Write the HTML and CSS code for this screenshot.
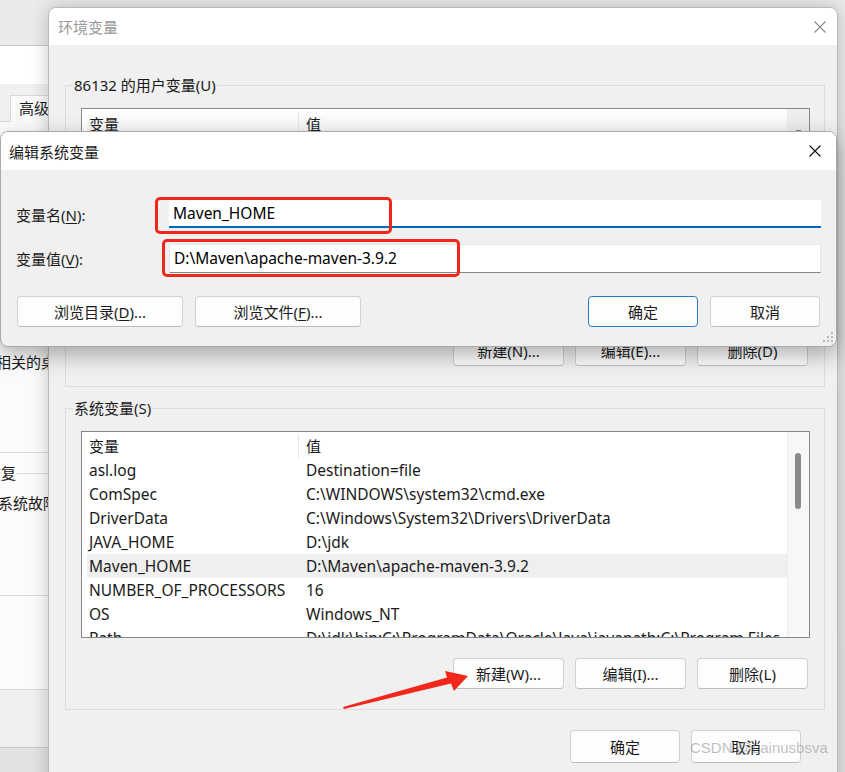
FILE: index.html
```html
<!DOCTYPE html>
<html lang="zh-CN">
<head>
<meta charset="utf-8">
<title>编辑系统变量</title>
<link rel="stylesheet" href="styles.css">
</head>
<body>
<div class="desk">

  <!-- background: System Properties window -->
  <div class="win sys">
    <div class="sys-title"></div>
    <div class="sys-tabs"><span class="tab">高级</span></div>
    <div class="sys-page">
      <div class="sys-sec s1"><p class="sys-text t1">与登录用户相关的桌面设置</p></div>
      <div class="sys-sec s2">
        <div class="sys-group"><span class="sys-legend">启动和故障恢复</span></div>
        <p class="sys-text t3">系统故障和调试信息</p>
      </div>
      <div class="sys-sec s3"></div>
    </div>
  </div>

  <!-- Environment variables window -->
  <div class="win env">
    <div class="titlebar env-title">
      <span class="title inactive">环境变量</span>
      <svg class="close grey" viewBox="0 0 12 12" width="12" height="12"><path d="M0.5 0.5 L11.5 11.5 M11.5 0.5 L0.5 11.5"/></svg>
    </div>
    <div class="env-body">
      <div class="group g1">
        <span class="legend">86132 的用户变量(U)</span>
        <div class="list">
          <div class="lmain">
            <div class="row head"><span class="c1">变量</span><span class="c2">值</span></div>
            <div class="row"><span class="c1">OneDrive</span><span class="c2">C:\Users\86132\OneDrive</span></div>
            <div class="row"><span class="c1">Path</span><span class="c2">C:\Users\86132\AppData\Local\Microsoft\WindowsApps;</span></div>
            <div class="row"><span class="c1">TEMP</span><span class="c2">C:\Users\86132\AppData\Local\Temp</span></div>
            <div class="row"><span class="c1">TMP</span><span class="c2">C:\Users\86132\AppData\Local\Temp</span></div>
          </div>
          <div class="sbar head-sbar"><span class="sbar-top"></span></div>
        </div>
        <div class="btnrow">
          <button class="btn">新建(N)...</button>
          <button class="btn">编辑(E)...</button>
          <button class="btn">删除(D)</button>
        </div>
      </div>

      <div class="group g2">
        <span class="legend">系统变量(S)</span>
        <div class="list">
          <div class="lmain">
            <div class="row head"><span class="c1">变量</span><span class="c2">值</span></div>
            <div class="row"><span class="c1">asl.log</span><span class="c2">Destination=file</span></div>
            <div class="row"><span class="c1">ComSpec</span><span class="c2">C:\WINDOWS\system32\cmd.exe</span></div>
            <div class="row"><span class="c1">DriverData</span><span class="c2">C:\Windows\System32\Drivers\DriverData</span></div>
            <div class="row"><span class="c1">JAVA_HOME</span><span class="c2">D:\jdk</span></div>
            <div class="row sel"><span class="c1">Maven_HOME</span><span class="c2">D:\Maven\apache-maven-3.9.2</span></div>
            <div class="row"><span class="c1">NUMBER_OF_PROCESSORS</span><span class="c2">16</span></div>
            <div class="row"><span class="c1">OS</span><span class="c2">Windows_NT</span></div>
            <div class="row"><span class="c1">Path</span><span class="c2">D:\jdk\bin;C:\ProgramData\Oracle\Java\javapath;C:\Program Files</span></div>
          </div>
          <div class="sbar"><span class="thumb"></span></div>
        </div>
        <div class="btnrow">
          <button class="btn">新建(W)...</button>
          <button class="btn">编辑(I)...</button>
          <button class="btn">删除(L)</button>
        </div>
      </div>

      <div class="footer">
        <button class="btn big">确定</button>
        <button class="btn big">取消</button>
      </div>
    </div>
  </div>

  <!-- Edit system variable dialog -->
  <div class="win dlg">
    <div class="titlebar dlg-title">
      <span class="title">编辑系统变量</span>
      <svg class="close" viewBox="0 0 12 12" width="12" height="12"><path d="M0.5 0.5 L11.5 11.5 M11.5 0.5 L0.5 11.5"/></svg>
    </div>
    <div class="dlg-body">
      <div class="field">
        <label class="flabel">变量名(<u>N</u>):</label>
        <div class="input active">Maven_HOME</div>
      </div>
      <div class="field f2">
        <label class="flabel">变量值(<u>V</u>):</label>
        <div class="input">D:\Maven\apache-maven-3.9.2</div>
      </div>
      <div class="dlg-btns">
        <button class="btn wide">浏览目录(<u>D</u>)...</button>
        <button class="btn wide">浏览文件(<u>F</u>)...</button>
        <span class="spacer"></span>
        <button class="btn primary">确定</button>
        <button class="btn">取消</button>
      </div>
    </div>
    <svg class="grip" viewBox="0 0 10 10" width="10" height="10">
      <rect x="8" y="0" width="2" height="2"/>
      <rect x="4" y="4" width="2" height="2"/><rect x="8" y="4" width="2" height="2"/>
      <rect x="0" y="8" width="2" height="2"/><rect x="4" y="8" width="2" height="2"/><rect x="8" y="8" width="2" height="2"/>
    </svg>
    <span class="mark m1"></span>
    <span class="mark m2"></span>
  </div>

  <!-- annotation arrow -->
  <svg class="arrow" viewBox="340 665 135 50" width="135" height="50">
    <polygon points="343,707 447,677.5 445,671 468,676 454,691 451,683.5 344,709"/>
  </svg>

  <div class="watermark">CSDN @Lainusbsva</div>
</div>
</body>
</html>
```

FILE: styles.css
```css
* { box-sizing: border-box; }
html, body { margin: 0; padding: 0; }
body {
  width: 845px;
  height: 772px;
  overflow: hidden;
  background: #e6e6e6;
  font-family: "Segoe UI", "Noto Sans", "Noto Sans CJK SC", sans-serif;
  font-size: 15px;
  color: #1a1a1a;
}
u { text-decoration: underline; text-underline-offset: 2px; }

.desk {
  position: relative;
  width: 845px;
  height: 772px;
  overflow: hidden;
  background: linear-gradient(#ebebeb, #e2e2e2);
}

.win { position: absolute; }

/* ---------- system properties (background) ---------- */
.sys {
  left: -400px;
  top: 45px;
  width: 460px;
  height: 703px;
  background: #f0f0f0;
  border: 1px solid #c8c8c8;
  border-radius: 8px;
  overflow: hidden;
}
.sys-title { height: 38px; background: #fff; }
.sys-tabs { height: 37px; position: relative; background: #f0f0f0; }
.sys-tabs .tab {
  position: absolute;
  left: 409px;
  top: 11px;
  height: 27px;
  padding: 0 8px;
  line-height: 25px;
  background: #fafafa;
  border: 1px solid #dadada;
  border-bottom: none;
}
.sys-page {
  height: 569px;
  background: #fbfbfb;
  border-top: 1px solid #dadada;
  border-bottom: 1px solid #dadada;
  display: flex;
  flex-direction: column;
}
.sys-sec { border-bottom: 1px solid #dcdcdc; position: relative; }
.sys-sec.s1 { height: 331px; display: flex; flex-direction: column; justify-content: flex-end; }
.sys-sec.s2 { height: 143px; }
.sys-sec.s3 { flex: 1; border-bottom: none; }
.sys-text { margin: 0; line-height: 20px; white-space: nowrap; }
.t1 { padding-left: 320px; margin-bottom: 80px; }
.sys-group {
  margin: 20px 0 0 300px;
  border-top: 1px solid #dcdcdc;
  height: 1px;
  position: relative;
}
.sys-legend {
  position: absolute;
  left: 10px;
  top: -11px;
  line-height: 20px;
  background: #fbfbfb;
  white-space: nowrap;
}
.t3 { padding-left: 397px; margin-top: 19px; }

/* ---------- title bars ---------- */
.titlebar {
  height: 38px;
  background: #fff;
  display: flex;
  align-items: center;
  justify-content: space-between;
}
.title { font-size: 15px; white-space: nowrap; }
.title.inactive { color: #9a9a9a; }
.close { stroke: #111; stroke-width: 1.1; fill: none; }
.close.grey { stroke: #8a8a8a; }

/* ---------- env window ---------- */
.env {
  left: 48px;
  top: 7px;
  width: 790px;
  height: 800px;
  background: #f0f0f0;
  border: 1px solid #b9b9b9;
  border-radius: 8px 8px 0 0;
  box-shadow: 0 0 18px rgba(0, 0, 0, 0.22);
  overflow: hidden;
}
.env-title { height: 37px; padding: 0 11px 0 9px; }
.env-body { padding: 0 12px 0 16px; }

.group {
  position: relative;
  border: 1px solid #dcdcdc;
  height: 302px;
  padding: 22px 14px 0 15px;
}
.g1 { margin-top: 40px; }
.g2 { margin-top: 21px; }
.legend {
  position: absolute;
  left: 7px;
  top: -11px;
  padding: 0 1px;
  line-height: 20px;
  background: #f0f0f0;
  white-space: nowrap;
}

.list {
  height: 207px;
  border: 1px solid #828790;
  background: #fff;
  display: flex;
  overflow: hidden;
}
.lmain { flex: 1; overflow: hidden; }
.row {
  display: grid;
  grid-template-columns: 212px 1fr;
  height: 24px;
  line-height: 24px;
  margin-left: 5px;
  white-space: nowrap;
  font-size: 15.5px;
}
.row .c1 { padding-left: 2px; overflow: hidden; }
.row .c2 { padding-left: 7px; overflow: hidden; }
.row.head { height: 26px; line-height: 24px; padding-top: 2px; font-size: 15px; }
.row.head .c1 { border-right: 1px solid #e5e5e5; }
.row.sel { background: #efefef; }
.g1 .row.head { background: linear-gradient(#fff, #f3f3f3); padding-top: 3px; }

.sbar {
  width: 22px;
  background: #f7f7f7;
  border-left: 1px solid #ececec;
  position: relative;
}
.thumb {
  position: absolute;
  left: 7px;
  top: 21px;
  width: 6px;
  height: 56px;
  border-radius: 3px;
  background: #8a8a8a;
}
.head-sbar { background: #ededed; }
.sbar-top {
  position: absolute;
  left: 8px;
  top: 21px;
  width: 5px;
  height: 2px;
  background: #888;
}

.btnrow {
  display: flex;
  justify-content: flex-end;
  gap: 11px;
  margin-top: 20px;
  padding-right: 2px;
}
.btn {
  font: inherit;
  color: #1a1a1a;
  width: 111px;
  height: 31px;
  padding: 0;
  background: #fdfdfd;
  border: 1px solid #d1d1d1;
  border-bottom-color: #bdbdbd;
  border-radius: 4px;
  white-space: nowrap;
}
.btn.big { width: 110px; height: 33px; }
.footer {
  display: flex;
  justify-content: flex-end;
  gap: 11px;
  margin-top: 20px;
  padding-right: 24px;
}

/* ---------- edit dialog ---------- */
.dlg {
  left: 0;
  top: 131px;
  width: 837px;
  height: 216px;
  background: #f0f0f0;
  border: 1px solid #a9a9a9;
  border-radius: 8px;
  box-shadow: 0 8px 22px rgba(0, 0, 0, 0.3);
  overflow: hidden;
}
.dlg-title { padding: 0 15px 0 8px; }
.dlg-body { padding: 30px 15px 0 15px; }
.field { display: flex; align-items: center; height: 28px; }
.field.f2 { margin-top: 16px; height: 29px; }
.flabel { width: 153px; white-space: nowrap; }
.input {
  flex: 1;
  height: 100%;
  background: #fff;
  padding-left: 4px;
  line-height: 26px;
  font-size: 15.5px;
  color: #000;
  border: 1px solid #e6e6e6;
  border-bottom-color: #878787;
  white-space: nowrap;
}
.input.active {
  border: none;
  border-bottom: 2px solid #0067c0;
  padding-left: 4px;
  line-height: 26px;
}
.dlg-btns {
  display: flex;
  gap: 12px;
  margin-top: 23px;
  padding-left: 1px;
  padding-right: 1px;
}
.dlg-btns .btn { width: 110px; }
.dlg-btns .btn.wide { width: 166px; }
.dlg-btns .spacer { flex: 1; }
.btn.primary { border: 1px solid #2a7bd0; }

.grip {
  position: absolute;
  right: 3px;
  bottom: 4px;
  fill: #bdbdbd;
}

.mark {
  position: absolute;
  border: 3px solid #f2271b;
  border-radius: 5px;
}
.m1 { left: 154px; top: 65px; width: 237px; height: 37px; }
.m2 { left: 161px; top: 107px; width: 298px; height: 38px; }

/* ---------- annotations ---------- */
.arrow {
  position: absolute;
  left: 340px;
  top: 665px;
  fill: #f2271b;
}
.watermark {
  position: absolute;
  left: 690px;
  top: 738px;
  font-family: "Liberation Sans", Arial, sans-serif;
  font-size: 15px;
  line-height: 20px;
  color: rgba(140, 140, 140, 0.55);
  white-space: nowrap;
}
```
